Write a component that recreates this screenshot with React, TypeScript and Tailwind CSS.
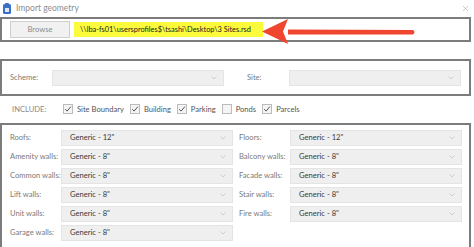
import { X } from 'lucide-react'

const ROWS: [string, string, string?, string?][] = [
  ['Roofs:', 'Generic - 12"', 'Floors:', 'Generic - 12"'],
  ['Amenity walls:', 'Generic - 8"', 'Balcony walls:', 'Generic - 8"'],
  ['Common walls:', 'Generic - 8"', 'Facade walls:', 'Generic - 8"'],
  ['Lift walls:', 'Generic - 8"', 'Stair walls:', 'Generic - 8"'],
  ['Unit walls:', 'Generic - 8"', 'Fire walls:', 'Generic - 8"'],
  ['Garage walls:', 'Generic - 8"'],
]

const INCLUDE = [
  { label: 'Site Boundary', on: true },
  { label: 'Building', on: true },
  { label: 'Parking', on: true },
  { label: 'Ponds', on: false },
  { label: 'Parcels', on: true },
]

function Chevron() {
  return (
    <svg width="6" height="4" viewBox="0 0 6 4" className="shrink-0">
      <path d="M0.5 0.5 L3 3 L5.5 0.5" fill="none" stroke="#cacaca" strokeWidth="0.9" />
    </svg>
  )
}

function Select({ value = '', width }: { value?: string; width: string }) {
  return (
    <div className={`${width} h-[16px] flex items-center justify-between pl-[8px] pr-[6px] bg-[#efefef] border border-[#e4e4e4] text-[#3a3a3a] shrink-0`}>
      <span className="whitespace-nowrap">{value}</span>
      <Chevron />
    </div>
  )
}

function Check({ on }: { on: boolean }) {
  return (
    <div className="w-[10px] h-[10px] border border-[#bcbcbc] bg-[#f4f4f4] flex items-center justify-center shrink-0">
      {on && (
        <svg width="8" height="8" viewBox="0 0 8 8">
          <path d="M1.2 4.2 L3.1 6.1 L6.9 1.6" fill="none" stroke="#555" strokeWidth="1" />
        </svg>
      )}
    </div>
  )
}

export default function App() {
  return (
    <div
      className="relative w-[474px] h-[247px] bg-white overflow-hidden text-[7.6px] text-[#7a7a7a]"
      style={{ fontFamily: 'Lato, "Open Sans", sans-serif' }}
    >
      {/* Title bar */}
      <div className="h-[17px] flex items-center justify-between pl-[3px] pr-[4px]">
        <div className="flex items-center gap-[5px]">
          <svg width="8" height="11" viewBox="0 0 8 11">
            <rect x="0" y="1" width="8" height="10" rx="1.5" fill="#3a6fc4" />
            <rect x="2" y="0" width="4" height="3" rx="1" fill="#3a6fc4" />
            <rect x="2" y="5" width="4" height="4" fill="#dce8fa" />
          </svg>
          <span className="text-[8.5px] text-[#8e8e8e]">Import geometry</span>
        </div>
        <X size={9} strokeWidth={1.4} color="#a0a0a0" />
      </div>

      {/* Browse panel */}
      <div className="w-[471px] h-[25px] border-2 border-[#7c7c7c] flex items-center pl-[8px]">
        <div className="w-[60px] h-[17px] bg-[#f1f1f1] border border-[#cfcfcf] flex items-center justify-center text-[#8c8c8c]">
          Browse
        </div>
        <div className="ml-[4px] w-[189px] h-[15px] bg-[#fbfb3c] flex items-center pl-[6px] text-[7.4px] text-[#222] whitespace-nowrap">
          \\lba-fs01\usersprofiles$\tsashi\Desktop\3 Sites.rsd
        </div>
      </div>

      {/* Scheme / Site panel */}
      <div className="mt-[17px] w-[471px] h-[37px] border-2 border-[#7c7c7c] flex items-center pl-[8px]">
        <span className="w-[42px]">Scheme:</span>
        <Select width="w-[172px]" />
        <span className="ml-[23px] w-[42px]">Site:</span>
        <Select width="w-[172px]" />
      </div>

      {/* Include row */}
      <div className="h-[27px] flex items-center pl-[12px]">
        <span className="w-[51px] text-[#8a8a8a]">INCLUDE:</span>
        <div className="flex items-center gap-[6px] text-[#555]">
          {INCLUDE.map((c) => (
            <div key={c.label} className="flex items-center gap-[4px]">
              <Check on={c.on} />
              <span>{c.label}</span>
            </div>
          ))}
        </div>
      </div>

      {/* Materials panel */}
      <div className="w-[471px] h-[140px] border-2 border-[#7c7c7c] pt-[5px] pl-[8px] flex flex-col gap-[3px]">
        {ROWS.map(([l1, v1, l2, v2]) => (
          <div key={l1} className="flex items-center h-[16px]">
            <span className="w-[51px] whitespace-nowrap overflow-hidden shrink-0">{l1}</span>
            <Select value={v1} width="w-[172px]" />
            {l2 && (
              <>
                <span className="ml-[6px] w-[51px] whitespace-nowrap shrink-0">{l2}</span>
                <Select value={v2} width="w-[172px]" />
              </>
            )}
          </div>
        ))}
      </div>

      {/* Red arrow annotation */}
      <svg className="absolute left-[258px] top-[17px]" width="162" height="30" viewBox="0 0 162 30">
        <path d="M30 12.5 L155 13 Q158 15 155 17.5 L30 17.5 Z" fill="#f0452e" />
        <path d="M4 14.5 L30 2 L25 14.5 L30 27 Z" fill="#f0452e" />
      </svg>
    </div>
  )
}
